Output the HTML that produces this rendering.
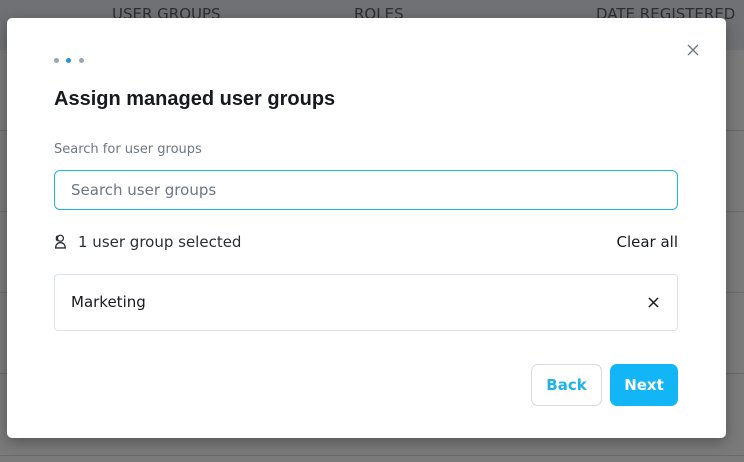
<!DOCTYPE html>
<html><head><style>
*{box-sizing:border-box;margin:0;padding:0}
body{width:744px;height:462px;overflow:hidden;background:#7a7a7a;font-family:"DejaVu Sans","Liberation Sans",sans-serif;position:relative}
.hdr{position:absolute;left:0;top:0;width:744px;height:50px;background:#6f7174}
.hdr span{position:absolute;top:5px;font-size:15px;color:#2b2f33}
.ln{position:absolute;left:0;width:744px;height:1px;background:#6a6a6a}
.modal{position:absolute;left:7px;top:18px;width:719px;height:420px;background:#fff;border-radius:5px;box-shadow:0 4px 14px rgba(0,0,0,.3)}
.dot{position:absolute;top:40px;width:5px;height:5px;border-radius:50%;background:#9aa6b4}
h1{position:absolute;left:47px;top:70px;font-family:"Liberation Sans",sans-serif;font-size:20px;font-weight:700;color:#16191d}
.lbl{position:absolute;left:47px;top:124px;font-size:13px;color:#6b7785}
.inp{position:absolute;left:47px;top:152px;width:624px;height:40px;border:1px solid #1fb3ea;border-radius:6px;padding:0 16px;line-height:38px;font-size:15px;color:#6b7785}
.sel{position:absolute;left:47px;top:215px;font-size:15px;color:#2a2f35}
.clr{position:absolute;right:48px;top:215px;font-size:15px;color:#16191d}
.item{position:absolute;left:47px;top:256px;width:624px;height:57px;border:1px solid #dde3ea;border-radius:4px;padding-left:16px;line-height:55px;font-size:15px;color:#16191d}
.btn{position:absolute;top:346px;height:42px;border-radius:7px;font-size:15px;font-weight:700;text-align:center;line-height:40px}
</style></head><body>
<div class="hdr"><span style="left:112px">USER GROUPS</span><span style="left:354px">ROLES</span><span style="left:596px">DATE REGISTERED</span></div>
<div class="ln" style="top:130px"></div><div class="ln" style="top:211px"></div><div class="ln" style="top:292px"></div><div class="ln" style="top:373px"></div><div class="ln" style="top:455px"></div>
<div class="modal">
<div class="dot" style="left:47px"></div><div class="dot" style="left:59px;background:#2f8fd0"></div><div class="dot" style="left:72px"></div>
<svg style="position:absolute;left:680px;top:26px" width="12" height="12" viewBox="0 0 12 12"><path d="M1 1L11 11M11 1L1 11" stroke="#6b7785" stroke-width="1.3"/></svg>
<h1>Assign managed user groups</h1>
<div class="lbl">Search for user groups</div>
<div class="inp">Search user groups</div>
<div class="sel"><svg width="15" height="15" viewBox="0 0 14 14" style="vertical-align:-2px;margin-right:9px"><circle cx="6" cy="4" r="2.8" fill="none" stroke="#2a2f35" stroke-width="1.2"/><path d="M1.5 13c0-3 2-5 4.5-5s4.5 2 4.5 5z" fill="none" stroke="#2a2f35" stroke-width="1.2"/><path d="M3.5 1.5a3 3 0 0 0 0 5" fill="none" stroke="#2a2f35" stroke-width="1.2"/></svg>1 user group selected</div>
<div class="clr">Clear all</div>
<div class="item">Marketing<svg style="position:absolute;right:18px;top:22px" width="11" height="11" viewBox="0 0 11 11"><path d="M1 1L10 10M10 1L1 10" stroke="#16191d" stroke-width="1.5"/></svg></div>
<div class="btn" style="left:524px;width:71px;border:1px solid #d3dae2;color:#1fb3ea">Back</div>
<div class="btn" style="left:603px;width:68px;background:#12b5f5;color:#fff;line-height:42px">Next</div>
</div>
</body></html>
